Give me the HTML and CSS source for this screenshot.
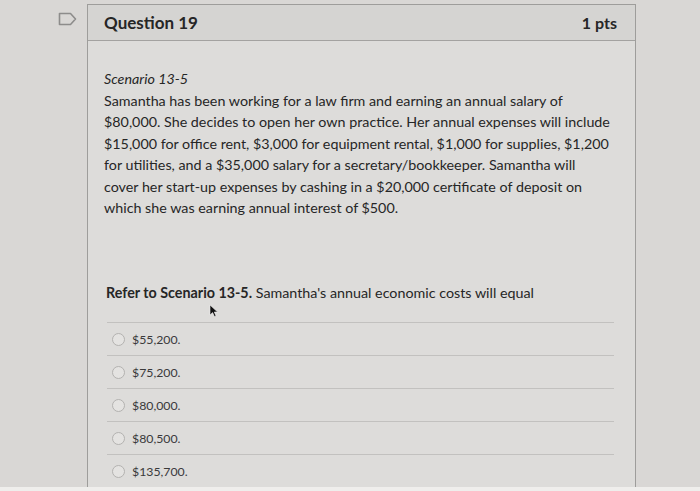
FILE: index.html
```html
<!DOCTYPE html>
<html lang="en">
<head>
  <meta charset="UTF-8">
  <title>Question 19</title>
  <link rel="stylesheet" href="styles.css">
</head>
<body>

<div class="page">
  <div class="gutter">
    <svg class="flag" width="19" height="14" viewBox="0 0 19 14">
      <path d="M1.5 1.5 H12.5 L17.5 7 L12.5 12.5 H1.5 Z" fill="none" stroke="#8d8c8b" stroke-width="1.6" stroke-linejoin="round"/>
    </svg>
  </div>

  <div class="question">
    <div class="q-header">
      <span class="q-title">Question 19</span>
      <span class="q-points">1 pts</span>
    </div>

    <div class="q-body">
      <p class="scenario">
        <em>Scenario 13-5</em><br>
        Samantha has been working for a law firm and earning an annual salary of<br>
        $80,000. She decides to open her own practice. Her annual expenses will include<br>
        $15,000 for office rent, $3,000 for equipment rental, $1,000 for supplies, $1,200<br>
        for utilities, and a $35,000 salary for a secretary/bookkeeper. Samantha will<br>
        cover her start-up expenses by cashing in a $20,000 certificate of deposit on<br>
        which she was earning annual interest of $500.
      </p>

      <p class="prompt"><strong>Refer to Scenario 13-5.</strong> Samantha's annual economic costs will equal</p>

      <svg class="cursor" width="10" height="14" viewBox="0 0 10 14">
        <path d="M1 1 L1 11 L3.6 8.6 L5.4 12.6 L7 11.9 L5.3 8 L8.6 8 Z" fill="#111" stroke="#eee" stroke-width="0.6"/>
      </svg>

      <ul class="answers">
        <li><span class="radio"></span>$55,200.</li>
        <li><span class="radio"></span>$75,200.</li>
        <li><span class="radio"></span>$80,000.</li>
        <li><span class="radio"></span>$80,500.</li>
        <li><span class="radio"></span>$135,700.</li>
      </ul>
    </div>
  </div>
</div>

</body>
</html>
```

FILE: styles.css
```css
html {
  background: #efeeec;
}
body {
  margin: 0;
  font-family: Lato, 'Open Sans', sans-serif;
  color: #262626;
}
.page {
  display: flex;
  height: 487px;
  overflow: hidden;
  padding-top: 4px;
  box-sizing: border-box;
  background: #d9d7d5;
}
.gutter {
  width: 87px;
  flex-shrink: 0;
}
.flag {
  display: block;
  margin: 8px 0 0 58px;
}
.question {
  width: 547px;
  border: 1px solid #9e9d9b;
  border-bottom: none;
  background: #dddcda;
}
.q-header {
  height: 35px;
  display: flex;
  align-items: center;
  justify-content: space-between;
  padding: 0 18px 0 16px;
  background: #d5d4d2;
  border-bottom: 1px solid #a3a2a0;
  font-weight: bold;
}
.q-title {
  font-size: 17px;
}
.q-points {
  font-size: 16px;
}
.q-body {
  position: relative;
  padding: 27px 21px 0 16px;
}
.scenario {
  margin: 0;
  font-size: 14.3px;
  line-height: 21.5px;
  white-space: nowrap;
}
.prompt {
  margin: 63px 0 0 2px;
  font-size: 14.3px;
  line-height: 21.5px;
}
.cursor {
  position: absolute;
  left: 121px;
  top: 263px;
}
.answers {
  list-style: none;
  margin: 19px 0 0 3px;
  padding: 0;
}
.answers li {
  display: flex;
  align-items: center;
  gap: 7px;
  height: 32px;
  padding-left: 5px;
  border-top: 1px solid #c2c1bf;
  font-size: 12.3px;
  color: #3a3a3a;
}
.radio {
  width: 11px;
  height: 11px;
  border: 1px solid #b3b2b0;
  border-radius: 50%;
  background: #e4e3e1;
}
```
